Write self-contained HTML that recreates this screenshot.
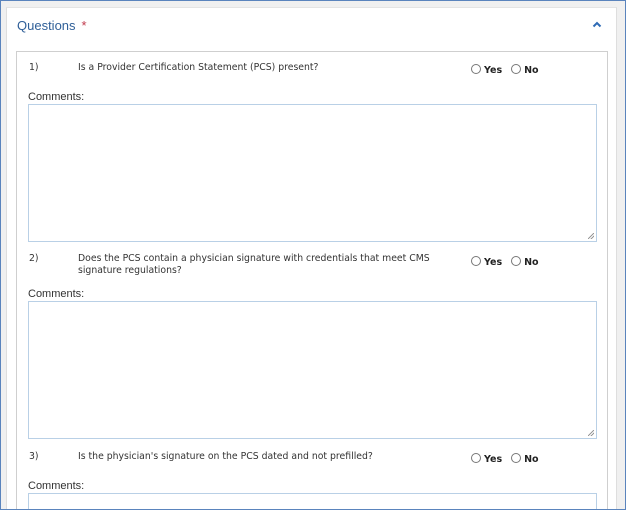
<!DOCTYPE html>
<html><head><style>
*{margin:0;padding:0;box-sizing:border-box}
html,body{width:626px;height:510px;overflow:hidden}
body{background:#f0f0f0;position:relative;font-family:"DejaVu Sans",Verdana,sans-serif}
.frame{position:absolute;left:0;top:0;width:626px;height:510px;border:1px solid #5a84bd;z-index:5}
.panel{position:absolute;left:6px;top:7px;width:611px;height:503px;background:#fff;border-left:1px solid #dedede;border-right:1px solid #dedede;border-top:1px solid #e4e4e4}
.title{position:absolute;left:17px;top:18px;font:13px "Liberation Sans",Tahoma,sans-serif;color:#2f5f98}
.title span{color:#c0394b;margin-left:6px}
.chev{position:absolute;left:592px;top:21px}
.box{position:absolute;left:16px;top:51px;width:592px;height:459px;border:1px solid #cfcfcf;border-bottom:none}
.num,.q{position:absolute;font-size:9.3px;color:#333;line-height:12px}
.num{left:29px}
.q{left:78px;width:380px}
.yn{position:absolute;left:471px;font-size:9.5px;font-weight:bold;color:#222}
.r{display:inline-block;width:10px;height:10px;border:1px solid #777;border-radius:50%;vertical-align:-1px;margin-right:3px}
.gap{display:inline-block;width:9px}
.cm{position:absolute;left:28px;font:11px "Liberation Sans",Tahoma,sans-serif;color:#333}
.ta{position:absolute;left:28px;width:569px;height:138px;border:1px solid #b9d0e6;background:#fff}
.grip:after{content:"";position:absolute;right:2px;bottom:2px;width:6px;height:6px;background:linear-gradient(135deg,transparent 45%,#999 45%,#999 55%,transparent 55%,transparent 70%,#999 70%,#999 80%,transparent 80%)}
</style></head><body>
<div class="frame"></div>
<div class="panel"></div>
<div class="title">Questions<span>*</span></div>
<svg class="chev" width="10" height="7" viewBox="0 0 10 7"><path d="M1.5 5.5L5 2l3.5 3.5" stroke="#2f6bb5" stroke-width="2" fill="none"/></svg>
<div class="box"></div>

<div class="num" style="top:62px">1)</div>
<div class="q" style="top:62px">Is a Provider Certification Statement (PCS) present?</div>
<div class="yn" style="top:64px"><span class="r"></span>Yes<span class="gap"></span><span class="r"></span>No</div>
<div class="cm" style="top:91px">Comments:</div>
<div class="ta grip" style="top:104px"></div>

<div class="num" style="top:253px">2)</div>
<div class="q" style="top:253px">Does the PCS contain a physician signature with credentials that meet CMS signature regulations?</div>
<div class="yn" style="top:256px"><span class="r"></span>Yes<span class="gap"></span><span class="r"></span>No</div>
<div class="cm" style="top:288px">Comments:</div>
<div class="ta grip" style="top:301px"></div>

<div class="num" style="top:451px">3)</div>
<div class="q" style="top:451px">Is the physician's signature on the PCS dated and not prefilled?</div>
<div class="yn" style="top:453px"><span class="r"></span>Yes<span class="gap"></span><span class="r"></span>No</div>
<div class="cm" style="top:480px">Comments:</div>
<div class="ta" style="top:493px;height:17px;border-bottom:none"></div>
</body></html>
